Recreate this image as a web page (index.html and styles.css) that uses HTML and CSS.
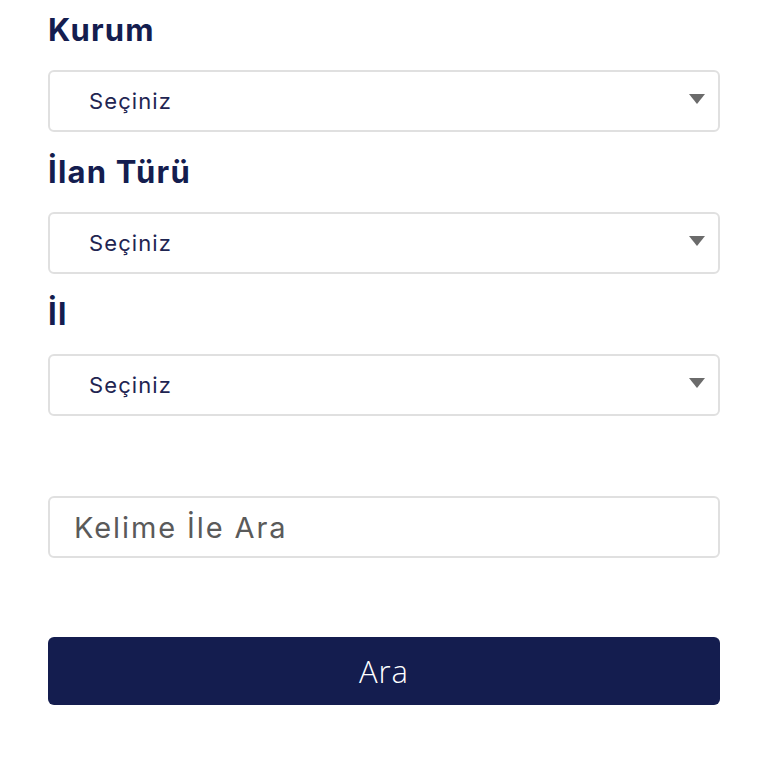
FILE: index.html
```html
<!DOCTYPE html>
<html lang="tr">
<head>
<meta charset="utf-8">
<link rel="stylesheet" href="styles.css">
</head>
<body>
<form class="form">
  <label class="label first">Kurum</label>
  <div class="select"><span class="select-text">Seçiniz</span><svg class="caret" width="16" height="10" viewBox="0 0 16 10"><path d="M0 0H16L8 10Z" fill="#6b6b6b"/></svg></div>
  <label class="label">İlan Türü</label>
  <div class="select"><span class="select-text">Seçiniz</span><svg class="caret" width="16" height="10" viewBox="0 0 16 10"><path d="M0 0H16L8 10Z" fill="#6b6b6b"/></svg></div>
  <label class="label">İl</label>
  <div class="select"><span class="select-text">Seçiniz</span><svg class="caret" width="16" height="10" viewBox="0 0 16 10"><path d="M0 0H16L8 10Z" fill="#6b6b6b"/></svg></div>
  <div class="spacer"></div>
  <input class="input" type="text" placeholder="Kelime İle Ara">
  <div class="spacer2"></div>
  <button class="button" type="button">Ara</button>
</form>
</body>
</html>
```
FILE: styles.css
```css
html, body {
  margin: 0;
  padding: 0;
  background: #ffffff;
}
body {
  font-family: "Inter", "DejaVu Sans", sans-serif;
}
.form {
  display: flex;
  flex-direction: column;
  padding: 0 48px;
}
.label {
  display: block;
  font-size: 31px;
  font-weight: 700;
  color: #141d4f;
  line-height: 38px;
  padding-top: 21px;
  padding-bottom: 21px;
  letter-spacing: 1.2px;
}
.label.first {
  padding-top: 11px;
}
.select {
  box-sizing: border-box;
  height: 62px;
  border: 2px solid #e0e0e0;
  border-radius: 6px;
  display: flex;
  align-items: center;
  justify-content: space-between;
  padding: 0 13px 0 39px;
}
.select-text {
  font-size: 22px;
  color: #1f2552;
  letter-spacing: 1.1px;
}
.caret {
  display: block;
  margin-top: -4px;
}
.spacer {
  height: 80px;
}
.spacer2 {
  height: 79px;
}
.input {
  box-sizing: border-box;
  height: 62px;
  border: 2px solid #e0e0e0;
  border-radius: 6px;
  padding: 0 24px;
  font-family: "Inter", "DejaVu Sans", sans-serif;
  font-size: 29px;
  color: #555;
  outline: none;
  width: 100%;
  letter-spacing: 1.9px;
}
.input::placeholder {
  color: #5a5a5a;
  letter-spacing: 1.9px;
}
.button {
  height: 68px;
  border: none;
  border-radius: 6px;
  background: #141d4f;
  color: #ffffff;
  font-family: "Open Sans", sans-serif;
  font-weight: 300;
  font-size: 31px;
  letter-spacing: 1px;
  width: 100%;
  padding: 0;
}
```
